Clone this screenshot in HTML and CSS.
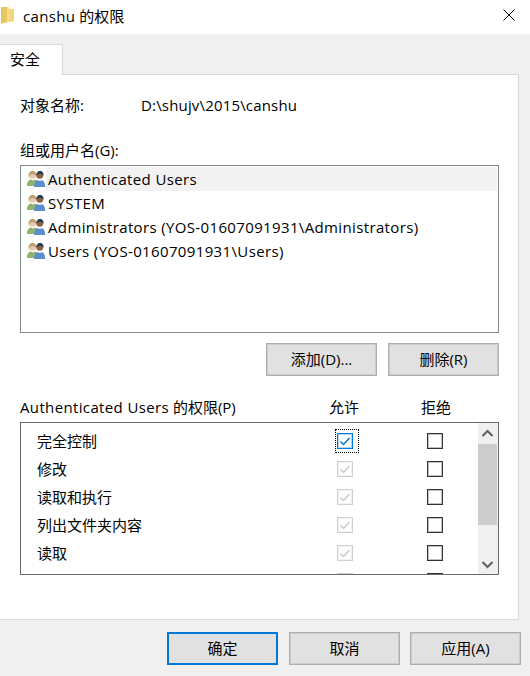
FILE: index.html
```html
<!DOCTYPE html>
<html lang="zh-CN">
<head>
  <meta charset="UTF-8" />
  <title>canshu 的权限</title>
  <link rel="stylesheet" href="styles.css">
</head>
<body>
  <svg class="defs" width="0" height="0">
    <symbol id="users" viewBox="0 0 18 18">
      <path class="body-a" d="M0 15c0-3 1.500-5 4-5.500l2 1 2-1c2 .5 3 2 3 4v2.500H0z"/>
      <circle class="face-a" cx="5.500" cy="5.500" r="3.300"/>
      <path class="hair-a" d="M1.800 8C1 3.500 2.500 1 5.500 1S10 3.500 9.200 8C9 5.500 7.500 4 5.500 4S2 5.500 1.800 8z"/>
      <path class="body-b" d="M7 17c0-3.500 1-6 4-7l2 1 2-1c2 1 3 3 3 5v2z"/>
      <circle class="face-b" cx="12.800" cy="5.500" r="3.300"/>
      <path class="hair-b" d="M9.300 6C9 3 10.500 1 13 1s4 2 3.500 5c-.5-1.500-2-2-3.500-2S10 4.500 9.300 6z"/>
    </symbol>
    <symbol id="tick" viewBox="0 0 16 16">
      <path d="M3.500 8.500l3 3 6-6.500" fill="none" stroke-width="1.500"/>
    </symbol>
  </svg>

  <div class="dialog">
    <div class="titlebar">
      <svg class="folder" width="15" height="18" viewBox="0 0 15 18">
        <path d="M1 1h6l2 2v13l-8 2z" fill="#e8c564"/>
        <path d="M7 1h2v2h4v13H3l-2 2 6-3z" fill="#fbe08f"/>
        <path d="M9 3h5v12H9z" fill="#f6d67a"/>
      </svg>
      <span class="title"><span class="latin">canshu</span> 的权限</span>
      <svg class="close" width="12" height="12" viewBox="0 0 12 12">
        <path d="M0.500 0.500l11 11M11.500 0.500l-11 11" stroke="#000" fill="none"/>
      </svg>
    </div>

    <div class="tabstrip">
      <div class="tab">安全</div>
    </div>

    <div class="panel">
      <div class="object-row">
        <span class="object-label">对象名称:</span>
        <span class="path">D:\shujv\2015\canshu</span>
      </div>

      <div class="group-label">组或用户名(G):</div>
      <ul class="user-list">
        <li class="user selected"><svg class="user-icon"><use href="#users"/></svg><span class="user-name latin">Authenticated Users</span></li>
        <li class="user"><svg class="user-icon"><use href="#users"/></svg><span class="user-name latin">SYSTEM</span></li>
        <li class="user"><svg class="user-icon"><use href="#users"/></svg><span class="user-name latin">Administrators (YOS-01607091931\Administrators)</span></li>
        <li class="user"><svg class="user-icon"><use href="#users"/></svg><span class="user-name latin">Users (YOS-01607091931\Users)</span></li>
      </ul>

      <div class="list-buttons">
        <button class="btn">添加(D)...</button>
        <button class="btn">删除(R)</button>
      </div>

      <div class="perm-header">
        <span class="perm-title"><span class="latin">Authenticated Users</span> 的权限(P)</span>
        <span class="perm-col">允许</span>
        <span class="perm-col">拒绝</span>
      </div>

      <div class="perm-box">
        <div class="perm-rows">
          <div class="perm-row">
            <span class="perm-name">完全控制</span>
            <span class="check on focus"><svg><use href="#tick"/></svg></span>
            <span class="check"></span>
          </div>
          <div class="perm-row">
            <span class="perm-name">修改</span>
            <span class="check off"><svg><use href="#tick"/></svg></span>
            <span class="check"></span>
          </div>
          <div class="perm-row">
            <span class="perm-name">读取和执行</span>
            <span class="check off"><svg><use href="#tick"/></svg></span>
            <span class="check"></span>
          </div>
          <div class="perm-row">
            <span class="perm-name">列出文件夹内容</span>
            <span class="check off"><svg><use href="#tick"/></svg></span>
            <span class="check"></span>
          </div>
          <div class="perm-row">
            <span class="perm-name">读取</span>
            <span class="check off"><svg><use href="#tick"/></svg></span>
            <span class="check"></span>
          </div>
          <div class="perm-row">
            <span class="perm-name"></span>
            <span class="check off"><svg><use href="#tick"/></svg></span>
            <span class="check"></span>
          </div>
        </div>
        <div class="scrollbar">
          <svg class="arrow" width="19" height="21" viewBox="0 0 19 21">
            <path d="M4.500 13l5-5 5 5" fill="none" stroke="#606060" stroke-width="2"/>
          </svg>
          <div class="thumb-track"><div class="thumb"></div></div>
          <svg class="arrow" width="19" height="21" viewBox="0 0 19 21">
            <path d="M4.500 9l5 5 5-5" fill="none" stroke="#606060" stroke-width="2"/>
          </svg>
        </div>
      </div>
    </div>

    <div class="footer">
      <button class="btn primary">确定</button>
      <button class="btn">取消</button>
      <button class="btn">应用(A)</button>
    </div>
  </div>
</body>
</html>
```

FILE: styles.css
```css
html, body {
  margin: 0;
  padding: 0;
}

body {
  width: 530px;
  height: 676px;
  overflow: hidden;
  font-family: "Open Sans", "Noto Sans CJK SC", sans-serif;
  font-size: 15px;
  color: #000;
  background: #f0f0f0;
}

.latin {
  letter-spacing: 0.36px;
}

.path {
  letter-spacing: 0.17px;
}

.defs {
  position: absolute;
}

.dialog {
  display: flex;
  flex-direction: column;
  height: 676px;
}

.titlebar {
  display: flex;
  align-items: center;
  box-sizing: border-box;
  height: 34px;
  background: #fff;
  padding: 0 15px 4px 0;
}

.title {
  margin-left: 8px;
  flex: 1;
}

.tabstrip {
  display: flex;
  align-items: flex-end;
  height: 41px;
  background: #f0f0f0;
  width: 519px;
  border-bottom: 1px solid #d9d9d9;
  box-sizing: border-box;
}

.tab {
  width: 63px;
  height: 31px;
  box-sizing: border-box;
  margin-bottom: -1px;
  padding-left: 10px;
  line-height: 28px;
  background: #fff;
  border-top: 1px solid #d9d9d9;
  border-right: 1px solid #d9d9d9;
}

.panel {
  box-sizing: border-box;
  width: 519px;
  height: 545px;
  padding: 20px 19px 0 20px;
  background: #fff;
  border-right: 1px solid #d9d9d9;
  border-bottom: 1px solid #d9d9d9;
}

.object-row {
  display: flex;
  height: 20px;
  line-height: 20px;
}

.object-label {
  width: 121px;
}

.group-label {
  height: 20px;
  line-height: 20px;
  margin-top: 25px;
}

.user-list {
  list-style: none;
  box-sizing: border-box;
  height: 168px;
  margin: 5px 0 0;
  padding: 1px;
  border: 1px solid #82878f;
}

.user {
  display: flex;
  align-items: center;
  height: 24px;
  padding-left: 5px;
}

.user-icon {
  width: 18px;
  height: 18px;
  margin-right: 1px;
  flex: none;
}

.user-name {
  flex: 1;
  padding-left: 2px;
  line-height: 24px;
}

.selected .user-name {
  background: #f2f2f2;
}

.selected .hair-a { fill: #6f7f78; }
.selected .face-a { fill: #a9b5ac; }
.selected .body-a { fill: #6f9a7a; }
.selected .face-b { fill: #5a6f8a; }

.body-a { fill: #8db36f; }
.face-a { fill: #e9c8a4; }
.hair-a { fill: #b8a26a; }
.body-b { fill: #5c8fc9; }
.face-b { fill: #8a6248; }
.hair-b { fill: #2f3b4f; }

.list-buttons {
  display: flex;
  justify-content: flex-end;
  gap: 11px;
  margin-top: 10px;
}

.btn {
  box-sizing: border-box;
  width: 111px;
  height: 33px;
  padding: 0 0 3px;
  font: inherit;
  color: #000;
  background: #e1e1e1;
  border: 1px solid #adadad;
  box-shadow: inset 0 0 0 1px rgba(173, 173, 173, 0.4);
}

.btn.primary {
  border: 2px solid #0078d7;
  box-shadow: none;
  margin-right: 1px;
}

.perm-header {
  display: flex;
  height: 20px;
  line-height: 18px;
  margin-top: 22px;
}

.perm-title {
  width: 309px;
  flex: none;
}

.perm-col {
  width: 92px;
  flex: none;
}

.perm-box {
  display: flex;
  box-sizing: border-box;
  height: 153px;
  margin-top: 4px;
  border: 1px solid #6a6a6a;
  overflow: hidden;
}

.perm-rows {
  flex: 1;
  min-width: 0;
  padding-top: 4px;
  overflow: hidden;
}

.perm-row {
  display: flex;
  align-items: center;
  height: 28px;
}

.perm-name {
  flex: none;
  width: 316px;
  padding: 0 0 2px 16px;
  box-sizing: border-box;
}

.check {
  position: relative;
  display: block;
  flex: none;
  box-sizing: border-box;
  width: 16px;
  height: 16px;
  margin-right: 74px;
  border: 1px solid #333;
  box-shadow: inset 0 0 0 1px rgba(51, 51, 51, 0.3);
}

.check:last-child {
  margin-right: 0;
}

.check svg {
  display: block;
  width: 16px;
  height: 16px;
  margin: -1px;
}

.check.on {
  border-color: #0078d7;
  box-shadow: inset 0 0 0 1px rgba(0, 120, 215, 0.3);
  stroke: #0078d7;
}

.check.off {
  border-color: #d0d0d0;
  box-shadow: inset 0 0 0 1px rgba(208, 208, 208, 0.3);
  stroke: #c8c8c8;
}

/* dotted keyboard focus mark sits over the row */
.check.focus::after {
  content: "";
  position: absolute;
  left: -3px;
  top: -5px;
  width: 22px;
  height: 22px;
  border: 1px dotted #000;
}

.scrollbar {
  display: flex;
  flex-direction: column;
  width: 20px;
  background: #f0f0f0;
  flex: none;
}

.arrow {
  display: block;
  flex: none;
}

.thumb-track {
  flex: 1;
  margin-right: 1px;
}

.thumb {
  height: 81px;
  background: #cdcdcd;
}

.footer {
  display: flex;
  justify-content: flex-end;
  gap: 10px;
  padding: 12px 9px 0 0;
}
```
